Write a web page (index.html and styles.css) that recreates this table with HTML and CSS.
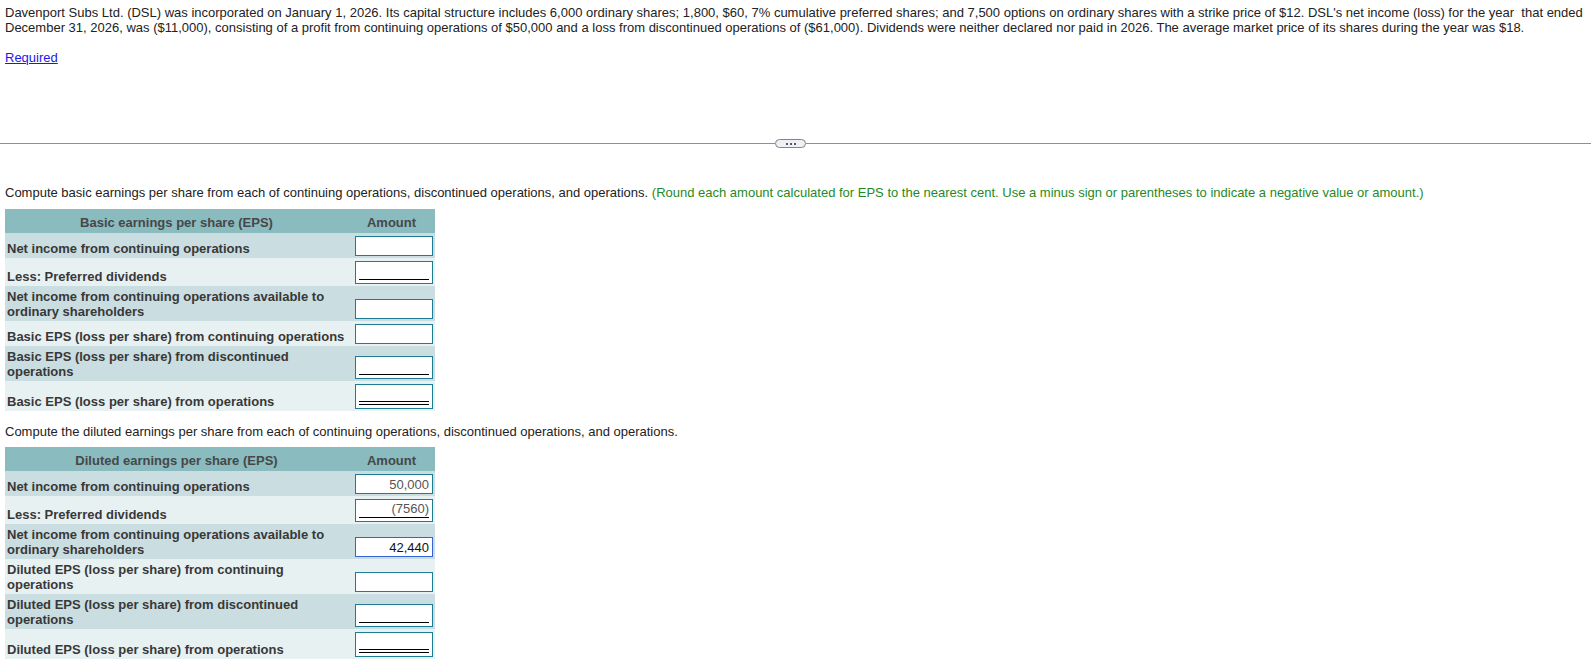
FILE: index.html
```html
<!DOCTYPE html>
<html lang="en">
<head>
    <meta charset="UTF-8">
    <title>Earnings per share</title>
    <link rel="stylesheet" href="styles.css">
</head>
<body>
    <p class="intro">Davenport Subs Ltd. (DSL) was incorporated on January 1, 2026. Its capital structure includes 6,000 ordinary shares; 1,800, $60, 7% cumulative preferred shares; and 7,500 options on ordinary shares with a strike price of $12. DSL's net income (loss) for the year&nbsp; that ended December 31, 2026, was ($11,000), consisting of a profit from continuing operations of $50,000 and a loss from discontinued operations of ($61,000). Dividends were neither declared nor paid in 2026. The average market price of its shares during the year was $18.</p>
    <a class="required" href="#">Required</a>

    <div class="divider">
        <button class="more" type="button"><span></span><span></span><span></span></button>
    </div>

    <p class="question">Compute basic earnings per share from each of continuing operations, discontinued operations, and operations. <span class="hint">(Round each amount calculated for EPS to the nearest cent. Use a minus sign or parentheses to indicate a negative value or amount.)</span></p>

    <table class="eps">
        <tr>
            <th class="label-col">Basic earnings per share (EPS)</th>
            <th class="amount-col">Amount</th>
        </tr>
        <tr class="dark">
            <td class="label">Net income from continuing operations</td>
            <td class="amount"><span class="box"><input type="text"></span></td>
        </tr>
        <tr class="light">
            <td class="label">Less: Preferred dividends</td>
            <td class="amount"><span class="box single"><input type="text"></span></td>
        </tr>
        <tr class="dark">
            <td class="label">Net income from continuing operations available to ordinary shareholders</td>
            <td class="amount"><span class="box"><input type="text"></span></td>
        </tr>
        <tr class="light">
            <td class="label">Basic EPS (loss per share) from continuing operations</td>
            <td class="amount"><span class="box"><input type="text"></span></td>
        </tr>
        <tr class="dark">
            <td class="label">Basic EPS (loss per share) from discontinued operations</td>
            <td class="amount"><span class="box single"><input type="text"></span></td>
        </tr>
        <tr class="light">
            <td class="label">Basic EPS (loss per share) from operations</td>
            <td class="amount"><span class="box double"><input type="text"></span></td>
        </tr>
    </table>

    <p class="question second">Compute the diluted earnings per share from each of continuing operations, discontinued operations, and operations.</p>

    <table class="eps">
        <tr>
            <th class="label-col">Diluted earnings per share (EPS)</th>
            <th class="amount-col">Amount</th>
        </tr>
        <tr class="dark">
            <td class="label">Net income from continuing operations</td>
            <td class="amount"><span class="box"><input type="text" value="50,000"></span></td>
        </tr>
        <tr class="light">
            <td class="label">Less: Preferred dividends</td>
            <td class="amount"><span class="box single"><input type="text" value="(7560)"></span></td>
        </tr>
        <tr class="dark">
            <td class="label">Net income from continuing operations available to ordinary shareholders</td>
            <td class="amount"><span class="box active"><input type="text" value="42,440"></span></td>
        </tr>
        <tr class="light">
            <td class="label">Diluted EPS (loss per share) from continuing operations</td>
            <td class="amount"><span class="box"><input type="text"></span></td>
        </tr>
        <tr class="dark">
            <td class="label">Diluted EPS (loss per share) from discontinued operations</td>
            <td class="amount"><span class="box single"><input type="text"></span></td>
        </tr>
        <tr class="light">
            <td class="label">Diluted EPS (loss per share) from operations</td>
            <td class="amount"><span class="box double"><input type="text"></span></td>
        </tr>
    </table>
</body>
</html>
```

FILE: styles.css
```css
* {
    margin: 0;
    padding: 0;
    box-sizing: border-box;
}

body {
    font-family: 'Liberation Sans', Arial, sans-serif;
    font-size: 13px;
    line-height: 15px;
    color: #222;
    background: #fff;
    padding: 5px;
}

.intro {
    margin: 0;
}

.required {
    display: inline-block;
    margin-top: 15px;
    color: #1a1ae6;
    text-decoration: underline;
}

.divider {
    display: flex;
    align-items: center;
    height: 9px;
    margin: 74px -5px 37px -5px;
}

.divider::before,
.divider::after {
    content: '';
    height: 1px;
    background: #8a9099;
}

.divider::before {
    flex: 1 0 0;
}

/* the toggle sits a little left of centre */
.divider::after {
    flex: 1 0 10px;
}

.more {
    display: flex;
    align-items: center;
    justify-content: center;
    gap: 2px;
    width: 31px;
    height: 9px;
    background: #eef0f4;
    border: 1px solid #7d848e;
    border-radius: 5px;
}

.more span {
    width: 2px;
    height: 2px;
    background: #555b66;
}

.question {
    margin-bottom: 9px;
}

.question.second {
    margin-top: 13px;
    margin-bottom: 8px;
}

.hint {
    color: #1f8a1f;
}

.eps {
    border-collapse: collapse;
    width: 430px;
    color: #383838;
    font-weight: bold;
}

.eps th {
    background: #89bbbf;
    color: #474747;
    height: 24px;
    padding: 4px 0 3px;
    vertical-align: bottom;
}

.label-col {
    width: 343px;
}

.eps td {
    padding: 3px 0 2px;
    vertical-align: bottom;
}

.dark {
    background: #cadde0;
}

.light {
    background: #e8f1f2;
}

.label {
    padding-left: 2px !important;
}

.amount {
    padding-left: 7px !important;
    padding-right: 2px !important;
}

.box {
    display: block;
    width: 78px;
    height: 20px;
    background: #fff;
    border: 1px solid #1d7b92;
    padding: 0 3px;
}

.box.single {
    height: 23px;
    padding-bottom: 3px;
}

.box.double {
    height: 25px;
    padding-bottom: 3px;
}

.box.active {
    border-color: #3562d4;
}

.box input {
    display: block;
    width: 100%;
    height: 100%;
    border: none;
    outline: none;
    background: transparent;
    font-family: 'Liberation Sans', Arial, sans-serif;
    font-size: 13px;
    text-align: right;
    color: #555;
    padding: 0;
}

.box.active input {
    color: #111;
}

.box.single input {
    border-bottom: 1px solid #000;
}

.box.double input {
    border-bottom: 4px double #000;
}
```
